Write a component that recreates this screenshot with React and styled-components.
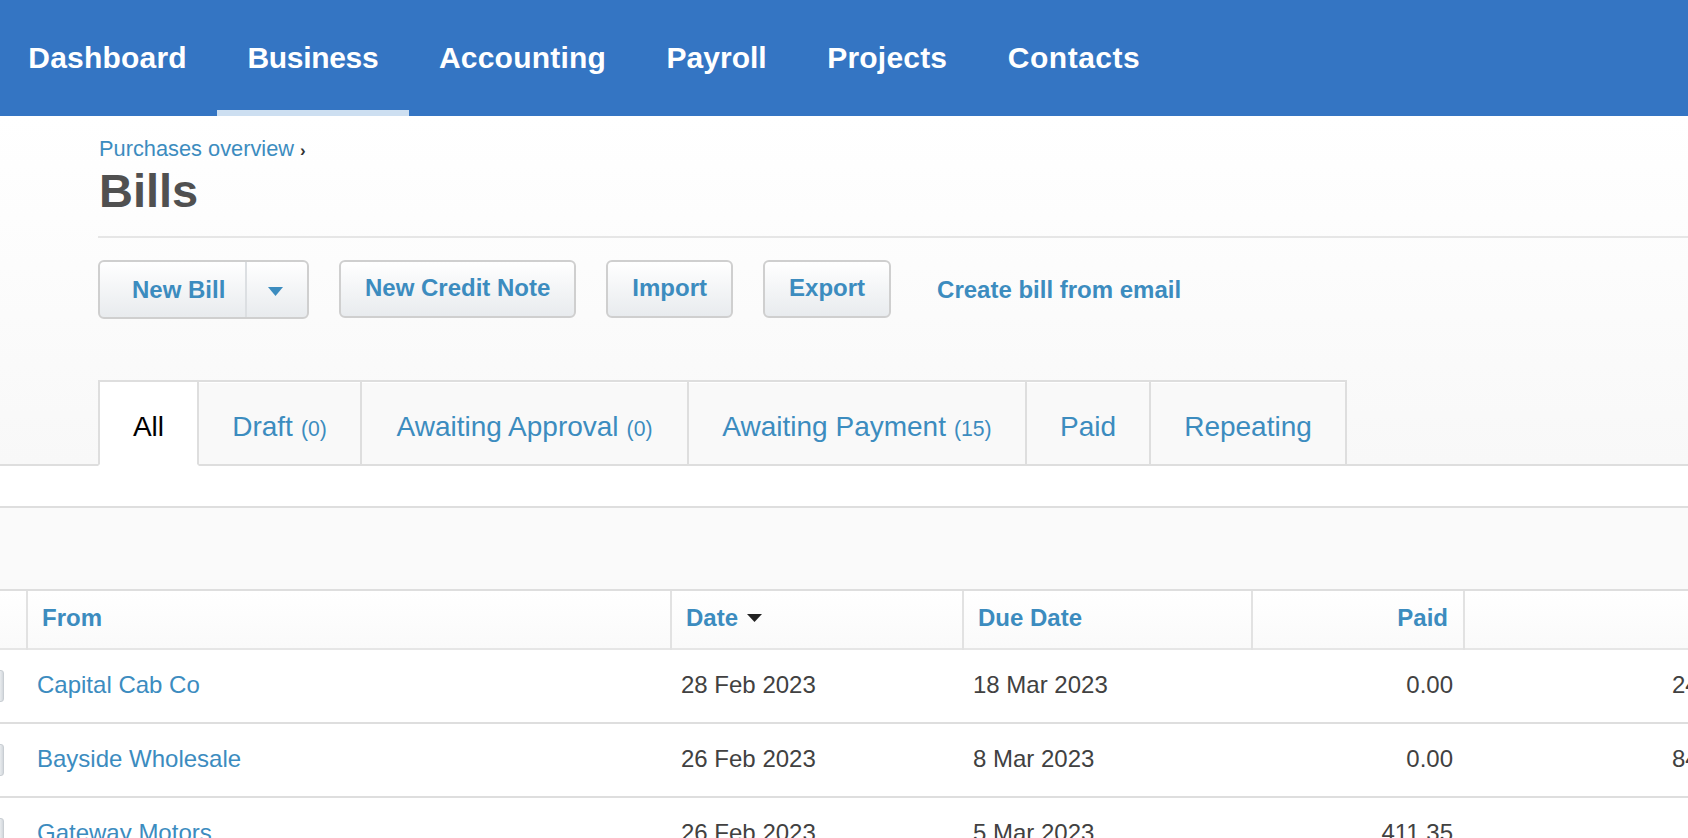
import React from 'react'
import styled, {createGlobalStyle} from 'styled-components'

const BLUE = '#3c8cbf'
const LINE = '#dedede'
const COLUMNS = '28px 644px 292px 289px 212px 1fr'

const GlobalStyle = createGlobalStyle`
    html, body {
        margin: 0;
        padding: 0;
        height: 838px;
        overflow: hidden;
        background: #fff;
        font-family: "Liberation Sans", Arial, sans-serif;
    }
`

const Page = styled.div`
    width: 1688px;
    height: 838px;
    overflow: hidden;
`

const NavBar = styled.nav`
    height: 116px;
    background: #3475c3;
    display: flex;
    margin-left: -2px;
`
const NavItem = styled.a`
    padding: 0 30.3px;
    display: flex;
    align-items: center;
    box-sizing: border-box;
    color: #fff;
    font-size: 30px;
    font-weight: 700;
    letter-spacing: ${p => p.$track || 0}px;
    border-bottom: 6px solid ${p => (p.$active ? '#cddff1' : 'transparent')};
    border-top: 6px solid transparent;
`

const Head = styled.header`
    height: 350px;
    box-sizing: border-box;
    padding-top: 20px;
    background: linear-gradient(#fff, #f8f8f8);
    border-bottom: 2px solid ${LINE};
    display: flex;
    flex-direction: column;
    & > * {
        flex: none;
    }
`
const TitleBlock = styled.div`
    margin-left: 98px;
    height: 102px;
    box-sizing: border-box;
    border-bottom: 2px solid #e6e6e6;
`
const Breadcrumb = styled.div`
    font-size: 21.8px;
    line-height: 26px;
    padding-left: 1px;
    color: ${BLUE};
    span {
        color: #333;
        font-size: 17px;
        font-weight: 700;
    }
`
const Title = styled.h1`
    margin: 1px 0 0 1px;
    font-size: 47px;
    line-height: 52px;
    font-weight: 700;
    color: #505050;
`

const Actions = styled.div`
    display: flex;
    align-items: flex-start;
    margin: 22px 0 0 98px;
    height: 120px;
`
const Button = styled.button`
    height: 58px;
    box-sizing: border-box;
    margin-right: 30px;
    padding: 0 24px 2px;
    border: 2px solid #cfcfcf;
    border-radius: 6px;
    background: linear-gradient(#fff, #e8ebee);
    color: ${BLUE};
    font: 700 24px "Liberation Sans", Arial, sans-serif;
`
const SplitButton = styled.div`
    display: flex;
    height: 59px;
    box-sizing: border-box;
    width: 211px;
    margin-right: 30px;
    border: 2px solid #cfcfcf;
    border-radius: 6px;
    background: linear-gradient(#fff, #e8ebee);
`
const SplitLabel = styled.div`
    width: 147px;
    box-sizing: border-box;
    padding-left: 32px;
    line-height: 55px;
    border-right: 2px solid #dcdfe2;
    color: ${BLUE};
    font-size: 24px;
    font-weight: 700;
`
const SplitArrow = styled.div`
    flex: 1;
    display: flex;
    align-items: center;
    justify-content: center;
    padding: 4px 3px 0 0;
`
const Caret = styled.svg`
    display: block;
`
const TextLink = styled.a`
    margin-left: 16px;
    line-height: 60px;
    color: ${BLUE};
    font-size: 24px;
    font-weight: 700;
`

const Tabs = styled.div`
    display: flex;
    margin-left: 98px;
    height: 86px;
`
const Tab = styled.a`
    width: ${p => p.$width}px;
    box-sizing: border-box;
    display: flex;
    align-items: center;
    justify-content: center;
    gap: 8px;
    padding-top: 8px;
    border: solid ${LINE};
    border-width: 2px 2px 2px 0;
    background: ${p => (p.$active ? '#fff' : '#f9f9f9')};
    border-bottom-color: ${p => (p.$active ? '#fff' : LINE)};
    border-left-width: ${p => (p.$active ? 2 : 0)}px;
    box-shadow: inset 0 1px 0 #fff;
    color: ${p => (p.$active ? '#000' : BLUE)};
    font-size: 28px;
    small {
        font-size: 21.2px;
        padding-top: 3px;
    }
`

const Toolbar = styled.div`
    height: 81px;
    margin-top: 40px;
    border-top: 2px solid ${LINE};
    background: #fafafa;
`

const Row = styled.div`
    display: grid;
    grid-template-columns: ${COLUMNS};
    height: 74px;
    box-sizing: border-box;
    border-bottom: 2px solid ${LINE};
`
const HeadRow = styled(Row)`
    height: 61px;
    border-top: 2px solid ${LINE};
    border-bottom-color: #e6e6e6;
    background: linear-gradient(#fff, #fafafa);
`
const HeadCell = styled.div`
    display: flex;
    align-items: center;
    justify-content: ${p => (p.$right ? 'flex-end' : 'flex-start')};
    gap: 9px;
    padding: ${p => (p.$right ? '0 15px 5px 0' : '0 0 5px 14px')};
    border-right: 2px solid #e2e2e2;
    margin-bottom: -2px;
    color: ${BLUE};
    font-size: 24px;
    font-weight: 700;
    &:last-child {
        border-right: 0;
    }
`
const SortArrow = styled.svg`
    display: block;
`
const Cell = styled.div`
    display: flex;
    align-items: center;
    white-space: nowrap;
    justify-content: ${p => (p.$right ? 'flex-end' : 'flex-start')};
    padding: ${p => (p.$right ? '0 12px 2px 0' : '0 0 2px 9px')};
    color: ${p => (p.$link ? BLUE : '#414141')};
    font-size: 24px;
`
const TotalCell = styled(Cell)`
    padding-left: 207px;
`
const FileCell = styled.div`
    display: flex;
    align-items: center;
`
const FileIcon = styled.div`
    width: 30px;
    height: 32px;
    margin-left: -26.5px;
    box-sizing: border-box;
    border: 1px solid #c9ced3;
    border-radius: 3px;
    background: linear-gradient(90deg, #fff, #f1f3f5 85%, #d3d8dd);
`

const bills = [
    {from: 'Capital Cab Co', date: '28 Feb 2023', due: '18 Mar 2023', paid: '0.00', total: '245.00'},
    {from: 'Bayside Wholesale', date: '26 Feb 2023', due: '8 Mar 2023', paid: '0.00', total: '845.00'},
    {from: 'Gateway Motors', date: '26 Feb 2023', due: '5 Mar 2023', paid: '411.35', total: ''},
]

export default function App() {
    return <Page>
        <GlobalStyle />

        <NavBar>
            <NavItem $track={0.2}>Dashboard</NavItem>
            <NavItem $active $track={-0.3}>Business</NavItem>
            <NavItem $track={0.2}>Accounting</NavItem>
            <NavItem>Payroll</NavItem>
            <NavItem $track={0.2}>Projects</NavItem>
            <NavItem $track={0.5}>Contacts</NavItem>
        </NavBar>

        <Head>
            <TitleBlock>
                <Breadcrumb>Purchases overview <span>›</span></Breadcrumb>
                <Title>Bills</Title>
            </TitleBlock>

            <Actions>
                <SplitButton>
                    <SplitLabel>New Bill</SplitLabel>
                    <SplitArrow>
                        <Caret width='15' height='9' viewBox='0 0 15 9'>
                            <path d='M0 0H15L7.5 9Z' fill={BLUE} />
                        </Caret>
                    </SplitArrow>
                </SplitButton>
                <Button>New Credit Note</Button>
                <Button>Import</Button>
                <Button>Export</Button>
                <TextLink>Create bill from email</TextLink>
            </Actions>

            <Tabs>
                <Tab $active $width={101}>All</Tab>
                <Tab $width={163}>Draft <small>(0)</small></Tab>
                <Tab $width={327}>Awaiting Approval <small>(0)</small></Tab>
                <Tab $width={338}>Awaiting Payment <small>(15)</small></Tab>
                <Tab $width={124}>Paid</Tab>
                <Tab $width={196}>Repeating</Tab>
            </Tabs>
        </Head>

        <Toolbar />

        <HeadRow>
            <HeadCell />
            <HeadCell>From</HeadCell>
            <HeadCell>
                Date
                <SortArrow width='15' height='8' viewBox='0 0 15 8'>
                    <path d='M0 0H15L7.5 8Z' fill='#222' />
                </SortArrow>
            </HeadCell>
            <HeadCell>Due Date</HeadCell>
            <HeadCell $right>Paid</HeadCell>
            <HeadCell />
        </HeadRow>

        {bills.map(bill => (
            <Row key={bill.from}>
                <FileCell><FileIcon /></FileCell>
                <Cell $link>{bill.from}</Cell>
                <Cell>{bill.date}</Cell>
                <Cell>{bill.due}</Cell>
                <Cell $right>{bill.paid}</Cell>
                <TotalCell>{bill.total}</TotalCell>
            </Row>
        ))}
    </Page>
}
